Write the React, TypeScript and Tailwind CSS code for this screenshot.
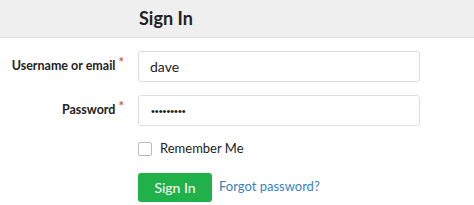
import { useState } from 'react';

function Label({ text }: { text: string }) {
  return (
    <label className="flex w-[138px] shrink-0 items-start justify-end whitespace-nowrap pr-[14px] text-[12.5px] font-bold text-[#222]">
      {text}
      <span className="ml-[3px] -mt-[4px] text-[13px] text-[#d9534f]">*</span>
    </label>
  );
}

function App() {
  const [user, setUser] = useState('dave');
  const [pass, setPass] = useState('123456789');
  const [remember, setRemember] = useState(false);

  return (
    <div className="min-h-screen bg-white font-['Lato',sans-serif] text-[#222]">
      <div className="flex h-[38px] items-center border-b border-[#dcdcdc] bg-[#efefef]">
        <h1 className="pl-[139px] text-[18px] font-bold text-[#222]">Sign In</h1>
      </div>

      <form className="mt-[13px] flex flex-col" onSubmit={(e) => e.preventDefault()}>
        <div className="flex items-center">
          <Label text="Username or email" />
          <input
            value={user}
            onChange={(e) => setUser(e.target.value)}
            className="h-[31px] w-[282px] rounded-[3px] border border-[#dedede] px-[11px] text-[14px] text-[#222] outline-none"
          />
        </div>
        <div className="mt-[13px] flex items-center">
          <Label text="Password" />
          <input
            type="password"
            value={pass}
            onChange={(e) => setPass(e.target.value)}
            className="h-[31px] w-[282px] rounded-[3px] border border-[#dedede] px-[12px] font-['Liberation_Sans',sans-serif] text-[11px] text-[#222] outline-none"
          />
        </div>
        <div className="ml-[138px] mt-[13px] flex items-center gap-[8px]">
          <button
            type="button"
            onClick={() => setRemember(!remember)}
            className="h-[14px] w-[14px] rounded-[2px] border border-[#bbb] bg-white"
          >
            {remember && <span className="block h-full w-full bg-[#21b14a]" />}
          </button>
          <span className="text-[13px] text-[#222]">Remember Me</span>
        </div>
        <div className="ml-[138px] mt-[14px] flex items-center gap-[7px]">
          <button
            type="submit"
            className="h-[29px] w-[74px] rounded-[3px] bg-[#21b14a] text-[14px] text-white"
          >
            Sign In
          </button>
          <a href="#" className="text-[13px] text-[#3a7fc1]">
            Forgot password?
          </a>
        </div>
      </form>
    </div>
  );
}

export default App;
